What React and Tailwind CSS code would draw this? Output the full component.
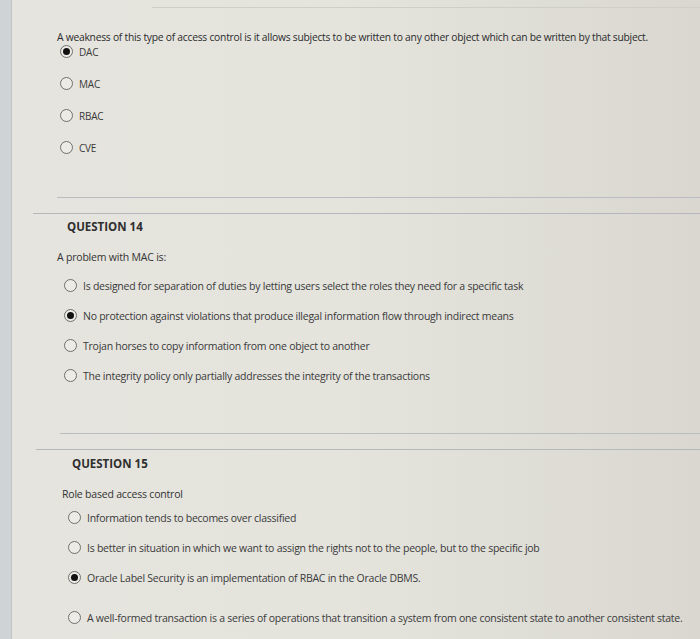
import React from "react";

function Radio({ checked }) {
  return (
    <span className="inline-flex items-center justify-center w-[13px] h-[13px] rounded-full border border-[#6f6f6f] bg-[#ecebe6] shrink-0">
      {checked ? <span className="w-[7px] h-[7px] rounded-full bg-[#111]" /> : null}
    </span>
  );
}

function Option({ checked, children, className = "" }) {
  return (
    <div className={"flex items-center gap-[6px] " + className}>
      <Radio checked={checked} />
      <span className="leading-none text-[#3a3a3a]">{children}</span>
    </div>
  );
}

export default function App() {
  return (
    <div
      className="w-[700px] h-[639px] overflow-hidden flex bg-gradient-to-r from-[#e5e4de] via-[#e4e4dd] to-[#d9d7d0]"
      style={{ fontFamily: '"Open Sans", "Liberation Sans", sans-serif' }}
    >
      <div className="w-[12px] shrink-0 bg-[#cfd3d6] border-r border-[#c2c5c6]" />
      <div className="flex-1 flex flex-col">
        <div className="h-[8px] ml-[140px] border-b border-[#cfcfca]" />
        <div className="ml-[45px] mt-[24px] text-[10.3px] tracking-[-0.25px] leading-none text-[#2b2b2b]">
          A weakness of this type of access control is it allows subjects to be written to any other object which can be written by that subject.
        </div>
        <div className="ml-[48px] mt-[3px] flex flex-col gap-[19px] text-[10px] tracking-[-0.2px]">
          <Option checked>DAC</Option>
          <Option>MAC</Option>
          <Option>RBAC</Option>
          <Option>CVE</Option>
        </div>

        <div className="ml-[45px] mt-[43px] border-t border-[#b9bcc0]" />
        <div className="ml-[21px] mt-[15px] border-t border-[#b4b7bb]" />

        <div className="ml-[55px] mt-[7px] text-[11.5px] font-bold leading-none text-[#2f2f2f]">QUESTION 14</div>
        <div className="ml-[45px] mt-[19px] text-[10.5px] tracking-[-0.2px] leading-none text-[#333]">A problem with MAC is:</div>
        <div className="ml-[52px] mt-[17px] flex flex-col gap-[17px] text-[10.5px] tracking-[-0.25px]">
          <Option>Is designed for separation of duties by letting users select the roles they need for a specific task</Option>
          <Option checked>No protection against violations that produce illegal information flow through indirect means</Option>
          <Option>Trojan horses to copy information from one object to another</Option>
          <Option>The integrity policy only partially addresses the integrity of the transactions</Option>
        </div>

        <div className="ml-[48px] mt-[51px] border-t border-[#b9bcc0]" />
        <div className="ml-[24px] mt-[15px] border-t border-[#b4b7bb]" />

        <div className="ml-[60px] mt-[8px] text-[11.5px] font-bold leading-none text-[#2f2f2f]">QUESTION 15</div>
        <div className="ml-[50px] mt-[19px] text-[10.5px] tracking-[-0.2px] leading-none text-[#333]">Role based access control</div>
        <div className="ml-[56px] mt-[12px] flex flex-col gap-[17px] text-[10.5px] tracking-[-0.25px]">
          <Option>Information tends to becomes over classified</Option>
          <Option>Is better in situation in which we want to assign the rights not to the people, but to the specific job</Option>
          <Option checked>Oracle Label Security is an implementation of RBAC in the Oracle DBMS.</Option>
          <Option className="mt-[10px]">A well-formed transaction is a series of operations that transition a system from one consistent state to another consistent state.</Option>
        </div>
      </div>
    </div>
  );
}
